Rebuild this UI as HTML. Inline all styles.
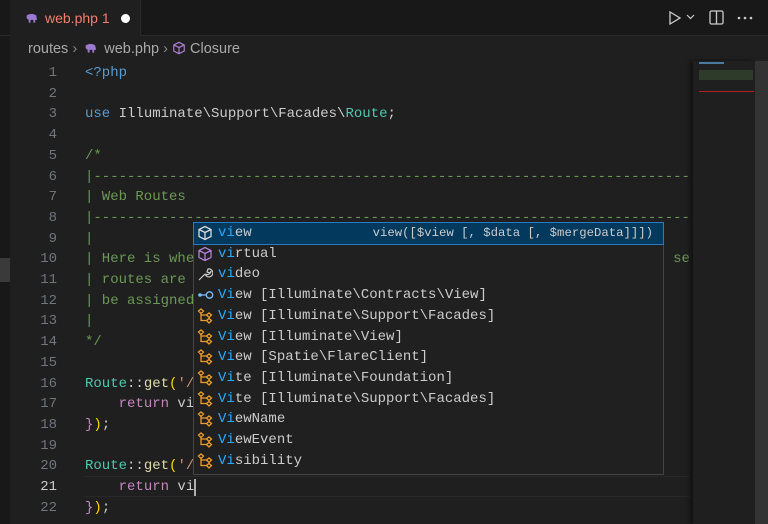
<!DOCTYPE html>
<html><head><style>
*{margin:0;padding:0;box-sizing:border-box}
html,body{width:768px;height:524px;overflow:hidden}
body{background:#1f1f1f;position:relative;font-family:"Liberation Sans",sans-serif}
.tabbar{position:absolute;left:0;top:0;width:768px;height:36px;background:#181818;border-bottom:1px solid #2b2b2b}
.tab{position:absolute;left:10px;top:0;width:131px;height:36px;background:#1f1f1f;border-right:1px solid #2b2b2b}
.tab span{position:absolute;left:35px;top:10px;font-size:14px;color:#f07f6d}
.dot{position:absolute;left:111px;top:14px;width:9px;height:9px;border-radius:50%;background:#fff}
.crumb{position:absolute;top:41px;left:28px;font-size:14.5px;color:#a9a9a9;white-space:nowrap}
.code{position:absolute;left:0;top:63px;font-family:"Liberation Mono",monospace;font-size:14px;line-height:20.7px;white-space:pre}
.ln{position:absolute;left:0;width:57px;text-align:right;color:#6e7681}
.tx{position:absolute;left:85px;color:#cccccc}
.k{color:#569cd6}.c{color:#6a9955}.t{color:#4ec9b0}.p{color:#c586c0}.f{color:#dcdcaa}.y{color:#ffd700}.s{color:#ce9178}
.sw{position:absolute;left:193px;top:222px;width:471px;height:253px;background:#202020;border:1px solid #454545;font-family:"Liberation Mono",monospace;font-size:14px}
.row{position:absolute;left:0;width:469px;height:20.7px;line-height:21.5px;white-space:pre;color:#cccccc}
.row .l{position:absolute;left:24px}
.row b{color:#2aaaff;font-weight:normal}
.row svg{position:absolute;left:3px;top:2px}
.sel{background:#04395e;outline:1px solid #2b79c2}
.det{position:absolute;right:10px;color:#cccccc;font-size:12.3px}
</style></head><body>
<div style="position:absolute;left:0;top:36px;width:10px;height:488px;background:#181818"></div>
<div style="position:absolute;left:0;top:258px;width:10px;height:24px;background:#3a3a3a"></div>
<div class="tabbar"><div class="tab">
<svg style="position:absolute;left:15px;top:13px" width="13" height="11" viewBox="0 0 14 11"><path d="M2 2 Q7 -1 12 2 L13 7 L11 7 L11 10 L9 10 L9 7 L6 7 L6 10 L4 10 L4 7 Q1 6 2 2Z" fill="#9b7ad0"/></svg>
<span>web.php 1</span><div class="dot"></div></div>
<svg style="position:absolute;left:668px;top:10px" width="14" height="16"><path d="M2 2 L12 8 L2 14Z" fill="none" stroke="#ccc" stroke-width="1.3"/></svg>
<svg style="position:absolute;left:686px;top:14px" width="9" height="6"><path d="M1 1 L4.5 4.5 L8 1" fill="none" stroke="#ccc" stroke-width="1.2"/></svg>
<svg style="position:absolute;left:709px;top:10px" width="16" height="16"><rect x="1" y="1" width="13" height="13" rx="1.5" fill="none" stroke="#ccc" stroke-width="1.3"/><path d="M7.5 1V14" stroke="#ccc" stroke-width="1.3"/></svg>
<svg style="position:absolute;left:737px;top:16px" width="16" height="4"><circle cx="2" cy="2" r="1.3" fill="#ccc"/><circle cx="8" cy="2" r="1.3" fill="#ccc"/><circle cx="14" cy="2" r="1.3" fill="#ccc"/></svg>
</div>
<div class="crumb">routes <span style="color:#888">›</span> <svg width="13" height="11" viewBox="0 0 14 11" style="vertical-align:-1px;margin:0 3px"><path d="M2 2 Q7 -1 12 2 L13 7 L11 7 L11 10 L9 10 L9 7 L6 7 L6 10 L4 10 L4 7 Q1 6 2 2Z" fill="#9b7ad0"/></svg> web.php <span style="color:#888">›</span> <svg width="14" height="14" viewBox="0 0 16 16" style="vertical-align:-2px"><path d="M8 1.5 L14 4.5 V11.5 L8 14.5 L2 11.5 V4.5Z M2 4.5 L8 7.5 L14 4.5 M8 7.5V14.5" fill="none" stroke="#b180d7" stroke-width="1.3"/></svg> Closure</div>
<div class="code">
<div class="ln" style="top:0">1</div><div class="tx" style="top:0"><span class="k">&lt;?php</span></div>
<div class="ln" style="top:20.7px">2</div>
<div class="ln" style="top:41.4px">3</div><div class="tx" style="top:41.4px"><span class="k">use</span> Illuminate\Support\Facades\<span class="t">Route</span>;</div>
<div class="ln" style="top:62.1px">4</div>
<div class="ln" style="top:82.8px">5</div><div class="tx c" style="top:82.8px">/*</div>
<div class="ln" style="top:103.5px">6</div><div class="tx c" style="top:103.5px">|--------------------------------------------------------------------------</div>
<div class="ln" style="top:124.2px">7</div><div class="tx c" style="top:124.2px">| Web Routes</div>
<div class="ln" style="top:144.9px">8</div><div class="tx c" style="top:144.9px">|--------------------------------------------------------------------------</div>
<div class="ln" style="top:165.6px">9</div><div class="tx c" style="top:165.6px">|</div>
<div class="ln" style="top:186.3px">10</div><div class="tx c" style="top:186.3px">| Here is whe                                                         se</div>
<div class="ln" style="top:207px">11</div><div class="tx c" style="top:207px">| routes are</div>
<div class="ln" style="top:227.7px">12</div><div class="tx c" style="top:227.7px">| be assigned</div>
<div class="ln" style="top:248.4px">13</div><div class="tx c" style="top:248.4px">|</div>
<div class="ln" style="top:269.1px">14</div><div class="tx c" style="top:269.1px">*/</div>
<div class="ln" style="top:289.8px">15</div>
<div class="ln" style="top:310.5px">16</div><div class="tx" style="top:310.5px"><span class="t">Route</span>::<span class="f">get</span><span class="y">(</span><span class="s">'/</span></div>
<div class="ln" style="top:331.2px">17</div><div class="tx" style="top:331.2px">    <span class="p">return</span> vi</div>
<div class="ln" style="top:351.9px">18</div><div class="tx" style="top:351.9px"><span class="p">}</span><span class="y">)</span>;</div>
<div class="ln" style="top:372.6px">19</div>
<div class="ln" style="top:393.3px">20</div><div class="tx" style="top:393.3px"><span class="t">Route</span>::<span class="f">get</span><span class="y">(</span><span class="s">'/</span></div>
<div class="ln" style="top:414px;color:#ccc">21</div><div class="tx" style="top:414px">    <span class="p">return</span> vi</div>
<div class="ln" style="top:434.7px">22</div><div class="tx" style="top:434.7px"><span class="p">}</span><span class="y">)</span>;</div>
</div>
<div style="position:absolute;left:84px;top:476px;width:606px;height:21px;border-top:1px solid #282828;border-bottom:1px solid #282828"></div>
<div style="position:absolute;left:194px;top:479px;width:2px;height:17px;background:#aeafad"></div>
<div style="position:absolute;left:693px;top:61px;width:62px;height:463px;background:#1f1f1f;box-shadow:-3px 0 4px #111"></div>
<div style="position:absolute;left:699px;top:62px;width:25px;height:2px;background:#4a7aa0"></div>
<div style="position:absolute;left:699px;top:70px;width:54px;height:10px;background:#2e3a2a"></div>
<div style="position:absolute;left:699px;top:91px;width:55px;height:1px;background:#b02020"></div>
<div style="position:absolute;left:755px;top:61px;width:13px;height:463px;background:#333"></div>
<div class="sw">
<div class="row sel" style="top:0"><svg width="16" height="16" viewBox="0 0 16 16"><path d="M8 1.5 L14 4.5 V11.5 L8 14.5 L2 11.5 V4.5Z M2 4.5 L8 7.5 L14 4.5 M8 7.5V14.5" fill="none" stroke="#ddd" stroke-width="1.3"/></svg><span class="l"><b>vi</b>ew</span><span class="det">view([$view [, $data [, $mergeData]]])</span></div>
<div class="row" style="top:20.7px"><svg width="16" height="16" viewBox="0 0 16 16"><path d="M8 1.5 L14 4.5 V11.5 L8 14.5 L2 11.5 V4.5Z M2 4.5 L8 7.5 L14 4.5 M8 7.5V14.5" fill="none" stroke="#b180d7" stroke-width="1.3"/></svg><span class="l"><b>vi</b>rtual</span></div>
<div class="row" style="top:41.4px"><svg width="16" height="16" viewBox="0 0 16 16"><path d="M2 14 L8 8 M8 8 A4 4 0 1 0 11 3 L10 6 L13 7 L14 5 A4 4 0 0 1 8 8" fill="none" stroke="#ccc" stroke-width="1.2"/></svg><span class="l"><b>vi</b>deo</span></div>
<div class="row" style="top:62.1px"><svg width="18" height="16" viewBox="0 0 18 16"><circle cx="3" cy="8" r="1.8" fill="#75beff"/><path d="M4 8H9" stroke="#75beff" stroke-width="1.3"/><circle cx="12.5" cy="8" r="3.2" fill="none" stroke="#75beff" stroke-width="1.3"/></svg><span class="l"><b>Vi</b>ew [Illuminate\Contracts\View]</span></div>
<div class="row" style="top:82.8px"><svg width="16" height="16" viewBox="0 0 16 16"><g fill="none" stroke="#ee9d28" stroke-width="1.3"><path d="M1.5 3 L4 1 L6.5 3 L4 5.5Z M9.5 7 L12 5 L14.5 7 L12 9.5Z M9.5 12.5 L12 10.5 L14.5 12.5 L12 15Z M4 5.5 V12.5 H9.5 M4 7 H9.5"/></g></svg><span class="l"><b>Vi</b>ew [Illuminate\Support\Facades]</span></div>
<div class="row" style="top:103.5px"><svg width="16" height="16" viewBox="0 0 16 16"><g fill="none" stroke="#ee9d28" stroke-width="1.3"><path d="M1.5 3 L4 1 L6.5 3 L4 5.5Z M9.5 7 L12 5 L14.5 7 L12 9.5Z M9.5 12.5 L12 10.5 L14.5 12.5 L12 15Z M4 5.5 V12.5 H9.5 M4 7 H9.5"/></g></svg><span class="l"><b>Vi</b>ew [Illuminate\View]</span></div>
<div class="row" style="top:124.2px"><svg width="16" height="16" viewBox="0 0 16 16"><g fill="none" stroke="#ee9d28" stroke-width="1.3"><path d="M1.5 3 L4 1 L6.5 3 L4 5.5Z M9.5 7 L12 5 L14.5 7 L12 9.5Z M9.5 12.5 L12 10.5 L14.5 12.5 L12 15Z M4 5.5 V12.5 H9.5 M4 7 H9.5"/></g></svg><span class="l"><b>Vi</b>ew [Spatie\FlareClient]</span></div>
<div class="row" style="top:144.9px"><svg width="16" height="16" viewBox="0 0 16 16"><g fill="none" stroke="#ee9d28" stroke-width="1.3"><path d="M1.5 3 L4 1 L6.5 3 L4 5.5Z M9.5 7 L12 5 L14.5 7 L12 9.5Z M9.5 12.5 L12 10.5 L14.5 12.5 L12 15Z M4 5.5 V12.5 H9.5 M4 7 H9.5"/></g></svg><span class="l"><b>Vi</b>te [Illuminate\Foundation]</span></div>
<div class="row" style="top:165.6px"><svg width="16" height="16" viewBox="0 0 16 16"><g fill="none" stroke="#ee9d28" stroke-width="1.3"><path d="M1.5 3 L4 1 L6.5 3 L4 5.5Z M9.5 7 L12 5 L14.5 7 L12 9.5Z M9.5 12.5 L12 10.5 L14.5 12.5 L12 15Z M4 5.5 V12.5 H9.5 M4 7 H9.5"/></g></svg><span class="l"><b>Vi</b>te [Illuminate\Support\Facades]</span></div>
<div class="row" style="top:186.3px"><svg width="16" height="16" viewBox="0 0 16 16"><g fill="none" stroke="#ee9d28" stroke-width="1.3"><path d="M1.5 3 L4 1 L6.5 3 L4 5.5Z M9.5 7 L12 5 L14.5 7 L12 9.5Z M9.5 12.5 L12 10.5 L14.5 12.5 L12 15Z M4 5.5 V12.5 H9.5 M4 7 H9.5"/></g></svg><span class="l"><b>Vi</b>ewName</span></div>
<div class="row" style="top:207px"><svg width="16" height="16" viewBox="0 0 16 16"><g fill="none" stroke="#ee9d28" stroke-width="1.3"><path d="M1.5 3 L4 1 L6.5 3 L4 5.5Z M9.5 7 L12 5 L14.5 7 L12 9.5Z M9.5 12.5 L12 10.5 L14.5 12.5 L12 15Z M4 5.5 V12.5 H9.5 M4 7 H9.5"/></g></svg><span class="l"><b>Vi</b>ewEvent</span></div>
<div class="row" style="top:227.7px"><svg width="16" height="16" viewBox="0 0 16 16"><g fill="none" stroke="#ee9d28" stroke-width="1.3"><path d="M1.5 3 L4 1 L6.5 3 L4 5.5Z M9.5 7 L12 5 L14.5 7 L12 9.5Z M9.5 12.5 L12 10.5 L14.5 12.5 L12 15Z M4 5.5 V12.5 H9.5 M4 7 H9.5"/></g></svg><span class="l"><b>Vi</b>sibility</span></div>
</div>
</body></html>
